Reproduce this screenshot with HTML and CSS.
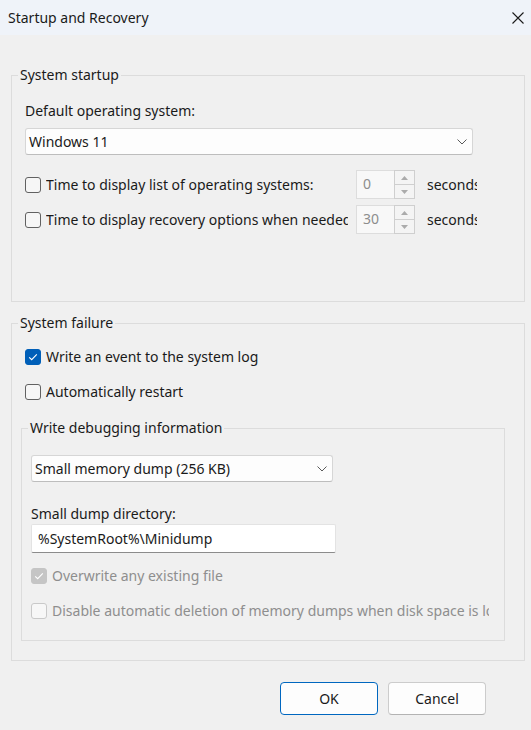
FILE: index.html
```html
<!DOCTYPE html>
<html lang="en">
<head>
<meta charset="utf-8">
<title>Startup and Recovery</title>
<link rel="stylesheet" href="styles.css">
</head>
<body>
<div class="titlebar">
  <span class="title">Startup and Recovery</span>
  <svg class="close" width="12" height="12" viewBox="0 0 12 12"><path d="M0.5 0.5L11.5 11.5M11.5 0.5L0.5 11.5" stroke="#1a1a1a" stroke-width="1.1" fill="none"/></svg>
</div>
<div class="content">
  <fieldset class="group startup">
    <legend>System startup</legend>
    <div class="label">Default operating system:</div>
    <div class="combo combo-os">
      <span class="combo-text">Windows 11</span>
      <svg class="chev" width="10" height="6" viewBox="0 0 10 6"><path d="M0.5 0.5L5 5L9.5 0.5" fill="none" stroke="#5a5a5a" stroke-width="1"/></svg>
    </div>
    <div class="spin-row first">
      <span class="cb"></span>
      <span class="cb-label clip">Time to display list of operating systems:</span>
      <div class="spin">
        <div class="spin-field">0</div>
        <div class="spin-btns">
          <span class="spin-btn"><svg width="7" height="4" viewBox="0 0 7 4"><path d="M0 4L3.5 0L7 4Z" fill="#ababab"/></svg></span>
          <span class="spin-btn"><svg width="7" height="4" viewBox="0 0 7 4"><path d="M0 0L3.5 4L7 0Z" fill="#ababab"/></svg></span>
        </div>
      </div>
      <span class="unit">seconds</span>
    </div>
    <div class="spin-row second">
      <span class="cb"></span>
      <span class="cb-label clip">Time to display recovery options when needed:</span>
      <div class="spin">
        <div class="spin-field">30</div>
        <div class="spin-btns">
          <span class="spin-btn"><svg width="7" height="4" viewBox="0 0 7 4"><path d="M0 4L3.5 0L7 4Z" fill="#ababab"/></svg></span>
          <span class="spin-btn"><svg width="7" height="4" viewBox="0 0 7 4"><path d="M0 0L3.5 4L7 0Z" fill="#ababab"/></svg></span>
        </div>
      </div>
      <span class="unit">seconds</span>
    </div>
  </fieldset>

  <fieldset class="group failure">
    <legend>System failure</legend>
    <div class="check">
      <span class="cb on"><svg width="16" height="16" viewBox="0 0 16 16"><path d="M4.2 8.3L6.7 10.7L11.8 5.4" fill="none" stroke="#fff" stroke-width="1.1"/></svg></span>
      <span class="cb-label">Write an event to the system log</span>
    </div>
    <div class="check next">
      <span class="cb"></span>
      <span class="cb-label">Automatically restart</span>
    </div>

    <fieldset class="group debug">
      <legend>Write debugging information</legend>
      <div class="combo combo-dump">
        <span class="combo-text">Small memory dump (256 KB)</span>
        <svg class="chev" width="10" height="6" viewBox="0 0 10 6"><path d="M0.5 0.5L5 5L9.5 0.5" fill="none" stroke="#5a5a5a" stroke-width="1"/></svg>
      </div>
      <div class="label dir-label">Small dump directory:</div>
      <div class="textbox">%SystemRoot%\Minidump</div>
      <div class="check overwrite disabled">
        <span class="cb dis on"><svg width="16" height="16" viewBox="0 0 16 16"><path d="M4.2 8.3L6.7 10.7L11.8 5.4" fill="none" stroke="#fff" stroke-width="1.1"/></svg></span>
        <span class="cb-label">Overwrite any existing file</span>
      </div>
      <div class="check next disabled">
        <span class="cb dis"></span>
        <span class="cb-label clip wide">Disable automatic deletion of memory dumps when disk space is low</span>
      </div>
    </fieldset>
  </fieldset>
</div>
<div class="buttons">
  <button class="btn default">OK</button>
  <button class="btn">Cancel</button>
</div>
</body>
</html>
```

FILE: styles.css
```css
* { box-sizing: border-box; }
html, body { margin: 0; padding: 0; }
body {
  width: 531px;
  height: 730px;
  overflow: hidden;
  background: #f0f0f0;
  font-family: "Noto Sans", "Open Sans", sans-serif;
  font-size: 14px;
  line-height: 20px;
  color: #1a1a1a;
}

.titlebar {
  height: 35px;
  background: #eff3f9;
  display: flex;
  align-items: center;
  justify-content: space-between;
  padding: 0 7px 0 8px;
}
.title { color: #1a1a1a; }
.close { display: block; }

.content { padding: 0 6px 0 11px; }

.group {
  margin: 0;
  min-width: 0;
  border: 1px solid #dcdcdc;
  padding: 0 0 0 13px;
}
.group > legend {
  padding: 0 2px;
  margin-left: -7px;
  line-height: 20px;
}
.startup { margin-top: 30px; padding-top: 16px; padding-bottom: 67px; }
.failure { margin-top: 11px; padding-top: 14px; padding-bottom: 19px; }
.debug { margin: 16px 19px 0 -4px; padding: 17px 0 19px 9px; }
.debug > legend { margin-left: -3px; }

.label { height: 20px; }

.combo {
  height: 27px;
  background: #fdfdfd;
  border: 1px solid #d6d6d6;
  border-bottom-color: #bdbdbd;
  border-radius: 3px;
  display: flex;
  align-items: center;
  justify-content: space-between;
  padding: 0 5px 0 3px;
}
.combo-os { width: 448px; margin-top: 7px; }
.combo-dump { width: 302px; }
.chev { display: block; }

.spin-row { display: flex; align-items: center; height: 29px; }
.spin-row.first { margin-top: 15px; }
.spin-row.second { margin-top: 6px; }

.cb {
  flex: none;
  width: 16px;
  height: 16px;
  border: 1px solid #616161;
  border-radius: 3px;
  background: #f6f6f6;
  margin-right: 5px;
  position: relative;
}
.cb svg { position: absolute; left: -1px; top: -1px; }
.cb.on { background: #005fb8; border-color: #005fb8; }
.cb.dis { border-color: #c9c9c9; background: #f7f7f7; }
.cb.dis.on { background: #c5c5c5; border-color: #c5c5c5; }

.cb-label { white-space: nowrap; }
.clip { overflow: hidden; }
.spin-row .cb-label { width: 302px; margin-right: 3px; flex: none; }
.cb-label.wide { width: 437px; flex: none; }

.spin {
  flex: none;
  display: flex;
  width: 59px;
  height: 29px;
  margin-left: 5px;
}
.spin-field {
  width: 38px;
  height: 29px;
  border: 1px solid #dddddd;
  border-right: none;
  background: #f8f8f8;
  color: #8d8d8d;
  padding-left: 6px;
  line-height: 25px;
}
.spin-btns { width: 21px; display: flex; flex-direction: column; }
.spin-btn {
  flex: 1;
  display: flex;
  align-items: center;
  justify-content: center;
  border: 1px solid #cfcfcf;
  background: #f4f4f4;
}
.spin-btn + .spin-btn { border-top: none; }
.unit { width: 50px; overflow: hidden; white-space: nowrap; margin-left: 12px; flex: none; }

.check { display: flex; align-items: center; height: 20px; }
.check.next { margin-top: 15px; }
.check.overwrite { margin-top: 13px; }
.disabled { color: #8e8e8e; }

.dir-label { margin-top: 22px; }
.textbox {
  width: 305px;
  height: 29px;
  background: #ffffff;
  border: 1px solid #e3e3e3;
  border-bottom-color: #8c8c8c;
  border-radius: 2px;
  padding-left: 6px;
  line-height: 27px;
}

.buttons {
  display: flex;
  justify-content: flex-end;
  gap: 10px;
  padding-right: 45px;
  margin-top: 21px;
}
.btn {
  width: 98px;
  height: 33px;
  font: inherit;
  color: #1a1a1a;
  background: #fdfdfd;
  border: 1px solid #cccccc;
  border-bottom-color: #b3b3b3;
  border-radius: 4px;
  padding: 0;
}
.btn.default { border-color: #0067c0; }
```
